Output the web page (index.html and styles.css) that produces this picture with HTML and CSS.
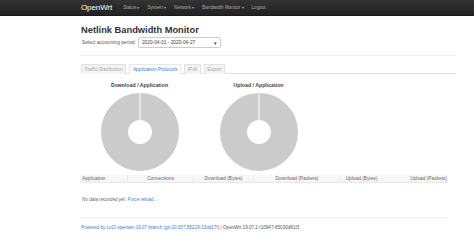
FILE: index.html
```html
<!DOCTYPE html>
<html>
<head>
<meta charset="utf-8">
<link rel="stylesheet" href="styles.css">
</head>
<body>
<header class="navbar">
  <div class="nav-inner">
    <span class="brand">OpenWrt</span>
    <ul class="menu">
      <li>Status <span class="caret">▾</span></li>
      <li>System <span class="caret">▾</span></li>
      <li>Network <span class="caret">▾</span></li>
      <li>Bandwidth Monitor <span class="caret">▾</span></li>
      <li>Logout</li>
    </ul>
  </div>
</header>
<main class="container">
  <h2 class="title">Netlink Bandwidth Monitor</h2>
  <div class="period">
    <label>Select accounting period:</label>
    <div class="select"><span>2020-04-01 - 2020-04-27</span><span class="arrow">▾</span></div>
  </div>
  <hr class="rule">
  <ul class="tabs">
    <li class="tab">Traffic Distribution</li>
    <li class="tab active">Application Protocols</li>
    <li class="tab">IPv6</li>
    <li class="tab">Export</li>
  </ul>
  <div class="charts">
    <div class="chart">
      <div class="chart-title">Download / Application</div>
      <svg class="donut" width="78" height="78" viewBox="0 0 78 78">
        <circle cx="39" cy="39" r="25.5" fill="none" stroke="#cbcbcb" stroke-width="27"/>
        <line x1="39" y1="0" x2="39" y2="27" stroke="#fff" stroke-width="1"/>
      </svg>
    </div>
    <div class="chart">
      <div class="chart-title">Upload / Application</div>
      <svg class="donut" width="78" height="78" viewBox="0 0 78 78">
        <circle cx="39" cy="39" r="25.5" fill="none" stroke="#cbcbcb" stroke-width="27"/>
        <line x1="39" y1="0" x2="39" y2="27" stroke="#fff" stroke-width="1"/>
      </svg>
    </div>
  </div>
  <div class="table">
    <div class="th th-app">Application</div>
    <div class="th">Connections</div>
    <div class="th">Download (Bytes)</div>
    <div class="th">Download (Packets)</div>
    <div class="th">Upload (Bytes)</div>
    <div class="th th-last">Upload (Packets)</div>
  </div>
  <p class="nodata"><em>No data recorded yet. <a class="link">Force reload…</a></em></p>
  <footer class="footer">
    <a class="link">Powered by LuCI openwrt-19.07 branch (git-20.057.55219-13dd17f)</a> / OpenWrt 19.07.2 r10947-65030d81f3
  </footer>
</main>
</body>
</html>
```
FILE: styles.css
```css
* { box-sizing: border-box; }
html, body { margin: 0; padding: 0; background: #fff; }
body { font-family: "Liberation Sans", Arial, sans-serif; color: #404040; font-size: 5px; }

.navbar { height: 16px; background: linear-gradient(#333, #222); border-bottom: 1px solid #1a1a1a; }
.nav-inner { display: flex; align-items: center; height: 15px; padding-left: 81px; }
.brand { color: #fff; font-size: 8px; letter-spacing: -0.1px; margin-right: 11px; }
.menu { list-style: none; margin: 0; padding: 0; display: flex; gap: 8px; }
.menu li { color: #aaa; font-size: 4.6px; }
.caret { font-size: 4px; }

.container { margin-left: 80px; width: 368px; }
.title { margin: 0; padding-top: 8px; font-size: 9.3px; line-height: 12px; font-weight: bold; color: #333; padding-left: 1px; }
.period { display: flex; align-items: center; gap: 2px; margin-top: 1px; padding-left: 2px; }
.period label { color: #555; font-size: 4.8px; }
.select { width: 83px; height: 11px; border: 1px solid #ccc; border-radius: 2px; display: flex; align-items: center; justify-content: space-between; padding: 0 3px 0 3px; color: #444; font-size: 4.8px; }
.arrow { font-size: 5px; color: #333; }

.rule { border: 0; border-top: 1px solid #eee; margin: 7px 0 0 0; width: 376px; }

.tabs { list-style: none; margin: 8px 0 0 1px; padding: 0; display: flex; gap: 3px; border-bottom: 1px solid #e2e2e2; width: 375px; height: 10px; }
.tab { height: 10px; padding: 0 2.5px; border: 1px solid #e2e2e2; border-bottom: 0; background: #f3f3f3; color: #aaa; font-size: 4.8px; line-height: 9px; }
.tab.active { background: #fff; color: #3a7bd5; border-color: #e8e8e8; height: 11px; }

.charts { display: flex; margin-top: 8px; }
.chart { width: 119px; display: flex; flex-direction: column; align-items: center; }
.chart-title { font-size: 5.2px; font-weight: bold; color: #444; line-height: 7px; }
.donut { display: block; margin-top: 4px; }

.table { display: grid; grid-template-columns: 47px 66px 60px 87px 42px 66px; margin-top: 4px; background: #f7f7f7; border-bottom: 1px solid #e6e6e6; height: 8px; }
.th { font-size: 4.8px; color: #666; line-height: 8px; text-align: center; border-left: 1px solid #ececec; white-space: nowrap; }
.th-app { text-align: left; padding-left: 2px; border-left: 0; }
.th-last { text-align: right; padding-right: 1px; }

.nodata { margin: 14px 0 0 2px; font-size: 4.6px; color: #666; line-height: 6px; }
.link { color: #3a7bd5; }

.footer { margin-top: 14px; border-top: 1px solid #eee; padding-top: 7px; font-size: 4.6px; color: #555; padding-left: 1px; }
```
